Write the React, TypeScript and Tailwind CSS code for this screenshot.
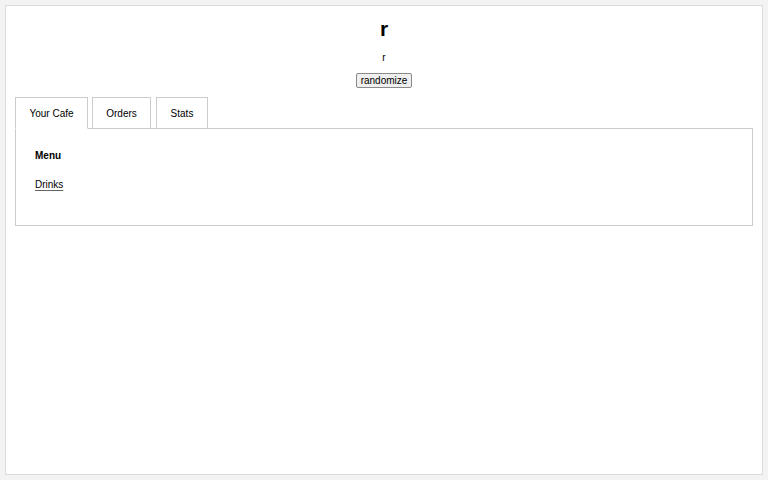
import React, { useState } from 'react';

const tabs = [
  { label: 'Your Cafe', cls: 'w-[73px] mr-[4px]' },
  { label: 'Orders', cls: 'w-[59px] mr-[5px]' },
  { label: 'Stats', cls: 'w-[52px]' },
];

export default function App() {
  const [active, setActive] = useState(0);
  const [name, setName] = useState('r');

  // just picks a random letter, same as the original toy page
  const randomize = () => {
    const letters = 'abcdefghijklmnopqrstuvwxyz';
    setName(letters[Math.floor(Math.random() * letters.length)]);
  };

  return (
    <div className="min-h-screen bg-[#f3f3f3] p-[5px] text-[10px] text-black" style={{ fontFamily: '"Liberation Sans", Arial, sans-serif' }}>
      <div className="h-[470px] border border-[#dcdcdc] bg-white px-[9px] pt-[9px]">
        {/* Header */}
        <h1 className="text-center text-[21px] font-bold leading-[28px]">{name}</h1>
        <p className="mt-[8px] text-center leading-[13px]">{name}</p>
        <div className="mt-[9px] flex justify-center">
          <button
            onClick={randomize}
            className="h-[15px] rounded-[2px] border border-[#8a8a8a] bg-[#efefef] px-[4px] text-[10px] leading-[13px]"
          >
            randomize
          </button>
        </div>

        {/* Tabs */}
        <div className="mt-[9px] flex">
          {tabs.map((t, i) => (
            <button
              key={t.label}
              onClick={() => setActive(i)}
              className={`relative flex h-[32px] items-center justify-center border border-[#cccccc] bg-white text-[10px] ${t.cls} ${
                i === active ? 'z-10 border-b-white' : 'h-[31px]'
              }`}
            >
              {t.label}
            </button>
          ))}
        </div>

        {/* Tab panel */}
        <div className="-mt-px h-[98px] border border-[#cccccc] px-[19px] pt-[20px]">
          {active === 0 && (
            <>
              <p className="font-bold leading-[13px]">Menu</p>
              <p className="mt-[16px] leading-[13px]">
                <a href="#" className="underline decoration-[#666] underline-offset-2">Drinks</a>
              </p>
            </>
          )}
        </div>
      </div>
    </div>
  );
}
